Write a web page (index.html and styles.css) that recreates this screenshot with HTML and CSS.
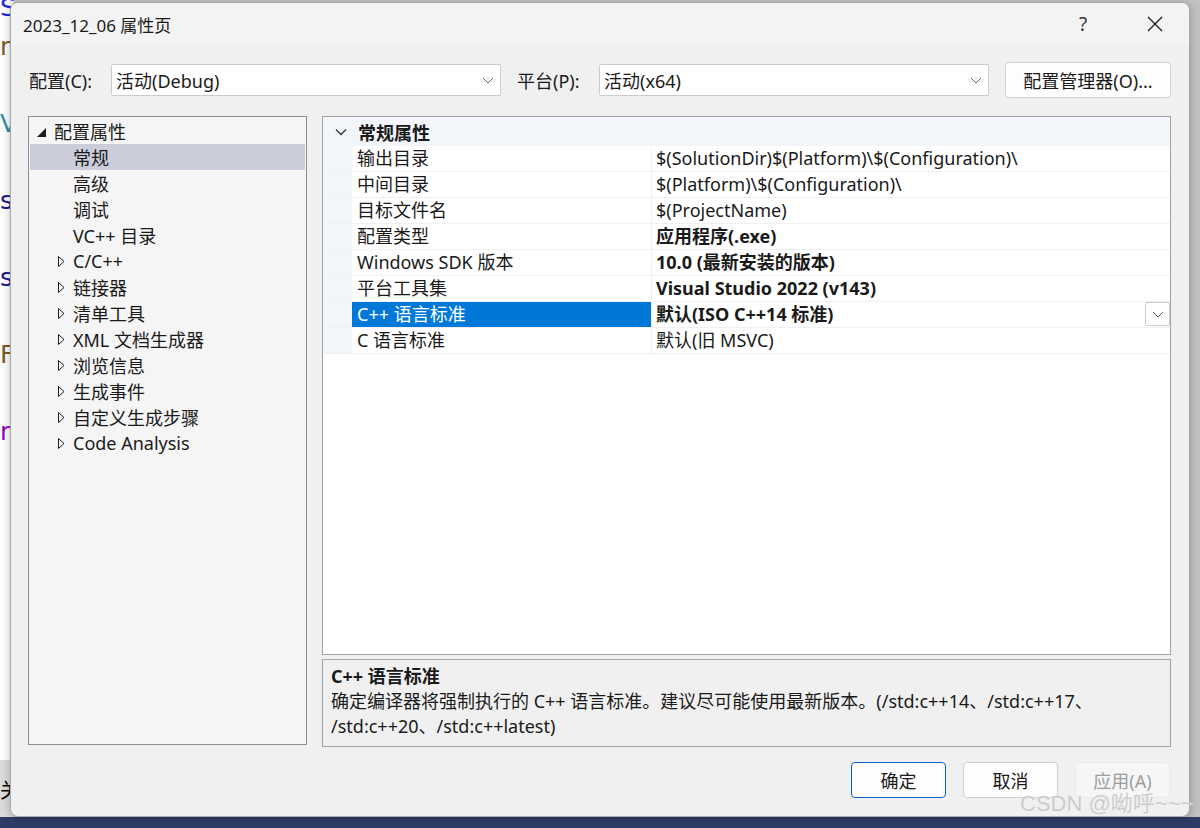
FILE: index.html
```html
<!DOCTYPE html>
<html lang="zh-CN">
<head>
  <meta charset="UTF-8">
  <title>2023_12_06 属性页</title>
  <link rel="stylesheet" href="styles.css">
</head>
<body>
  <!-- editor window behind the dialog, only its left edge shows -->
  <div class="editor">
    <div class="code kw">S</div>
    <div class="code ty">n</div>
    <div class="code"></div>
    <div class="code cl">V</div>
    <div class="code"></div>
    <div class="code">s</div>
    <div class="code"></div>
    <div class="code">s</div>
    <div class="code"></div>
    <div class="code ty">F</div>
    <div class="code"></div>
    <div class="code pu">r</div>
    <div class="status">关</div>
  </div>
  <div class="taskbar"></div>

  <div class="dialog">
    <div class="titlebar">
      <span class="title">2023_12_06 属性页</span>
      <span class="tb-btn help">?</span>
      <span class="tb-btn close">
        <svg width="16" height="16" viewBox="0 0 16 16"><path d="M1 1L15 15M15 1L1 15" stroke="#1a1a1a" stroke-width="1.3" fill="none"/></svg>
      </span>
    </div>

    <div class="config-row">
      <span class="lbl">配置(C):</span>
      <div class="combo">
        <span>活动(Debug)</span>
        <svg width="12" height="7" viewBox="0 0 12 7"><polyline points="1,1 6,6 11,1" stroke="#606060" stroke-width="1" fill="none"/></svg>
      </div>
      <span class="lbl lbl2">平台(P):</span>
      <div class="combo">
        <span>活动(x64)</span>
        <svg width="12" height="7" viewBox="0 0 12 7"><polyline points="1,1 6,6 11,1" stroke="#606060" stroke-width="1" fill="none"/></svg>
      </div>
      <button class="btn mgr">配置管理器(O)...</button>
    </div>

    <div class="main">
      <div class="tree">
        <div class="node root">
          <span class="tw"><svg width="9" height="9" viewBox="0 0 9 9"><polygon points="9,0 9,9 0,9" fill="#1e1e1e"/></svg></span>
          配置属性
        </div>
        <div class="node leaf selected"><span class="tw"></span>常规</div>
        <div class="node leaf"><span class="tw"></span>高级</div>
        <div class="node leaf"><span class="tw"></span>调试</div>
        <div class="node leaf"><span class="tw"></span>VC++ 目录</div>
        <div class="node leaf"><span class="tw"><svg class="col" width="7" height="11" viewBox="0 0 7 11"><polygon points="0.5,0.5 6,5.5 0.5,10.5" fill="none" stroke="#1e1e1e"/></svg></span>C/C++</div>
        <div class="node leaf"><span class="tw"><svg class="col" width="7" height="11" viewBox="0 0 7 11"><polygon points="0.5,0.5 6,5.5 0.5,10.5" fill="none" stroke="#1e1e1e"/></svg></span>链接器</div>
        <div class="node leaf"><span class="tw"><svg class="col" width="7" height="11" viewBox="0 0 7 11"><polygon points="0.5,0.5 6,5.5 0.5,10.5" fill="none" stroke="#1e1e1e"/></svg></span>清单工具</div>
        <div class="node leaf"><span class="tw"><svg class="col" width="7" height="11" viewBox="0 0 7 11"><polygon points="0.5,0.5 6,5.5 0.5,10.5" fill="none" stroke="#1e1e1e"/></svg></span>XML 文档生成器</div>
        <div class="node leaf"><span class="tw"><svg class="col" width="7" height="11" viewBox="0 0 7 11"><polygon points="0.5,0.5 6,5.5 0.5,10.5" fill="none" stroke="#1e1e1e"/></svg></span>浏览信息</div>
        <div class="node leaf"><span class="tw"><svg class="col" width="7" height="11" viewBox="0 0 7 11"><polygon points="0.5,0.5 6,5.5 0.5,10.5" fill="none" stroke="#1e1e1e"/></svg></span>生成事件</div>
        <div class="node leaf"><span class="tw"><svg class="col" width="7" height="11" viewBox="0 0 7 11"><polygon points="0.5,0.5 6,5.5 0.5,10.5" fill="none" stroke="#1e1e1e"/></svg></span>自定义生成步骤</div>
        <div class="node leaf"><span class="tw"><svg class="col" width="7" height="11" viewBox="0 0 7 11"><polygon points="0.5,0.5 6,5.5 0.5,10.5" fill="none" stroke="#1e1e1e"/></svg></span>Code Analysis</div>
      </div>

      <div class="right">
        <div class="grid">
          <div class="category">
            <svg width="12" height="8" viewBox="0 0 12 8"><polyline points="1,1.5 6,6.5 11,1.5" stroke="#333" stroke-width="1.3" fill="none"/></svg>
            <span>常规属性</span>
          </div>
          <div class="prop"><span class="gut"></span><span class="name">输出目录</span><span class="val">$(SolutionDir)$(Platform)\$(Configuration)\</span></div>
          <div class="prop"><span class="gut"></span><span class="name">中间目录</span><span class="val">$(Platform)\$(Configuration)\</span></div>
          <div class="prop"><span class="gut"></span><span class="name">目标文件名</span><span class="val">$(ProjectName)</span></div>
          <div class="prop"><span class="gut"></span><span class="name">配置类型</span><span class="val bold">应用程序(.exe)</span></div>
          <div class="prop"><span class="gut"></span><span class="name">Windows SDK 版本</span><span class="val bold">10.0 (最新安装的版本)</span></div>
          <div class="prop"><span class="gut"></span><span class="name">平台工具集</span><span class="val bold">Visual Studio 2022 (v143)</span></div>
          <div class="prop active">
            <span class="gut"></span><span class="name">C++ 语言标准</span>
            <span class="val bold">默认(ISO C++14 标准)
              <span class="drop"><svg width="12" height="7" viewBox="0 0 12 7"><polyline points="1,1 6,6 11,1" stroke="#555" stroke-width="1" fill="none"/></svg></span>
            </span>
          </div>
          <div class="prop"><span class="gut"></span><span class="name">C 语言标准</span><span class="val">默认(旧 MSVC)</span></div>
        </div>
        <div class="desc">
          <div class="desc-title">C++ 语言标准</div>
          <div>确定编译器将强制执行的 C++ 语言标准。建议尽可能使用最新版本。(/std:c++14、/std:c++17、<br>/std:c++20、/std:c++latest)</div>
        </div>
      </div>
    </div>

    <div class="buttons">
      <button class="btn primary">确定</button>
      <button class="btn">取消</button>
      <button class="btn disabled">应用(A)</button>
    </div>
  </div>

  <div class="watermark">CSDN @呦呼~~~</div>
</body>
</html>
```

FILE: styles.css
```css
* {
  box-sizing: border-box;
}

html, body {
  margin: 0;
}

body {
  width: 1200px;
  height: 828px;
  overflow: hidden;
  position: relative;
  background: #c2c2c2;
  font-family: "Noto Sans", "Noto Sans CJK SC", sans-serif;
  font-size: 18px;
  color: #1a1a1a;
}

/* desktop pieces */
.editor {
  position: absolute;
  left: 0;
  top: 0;
  width: 14px;
  height: 817px;
  overflow: hidden;
  background: linear-gradient(to right, #ffffff 60%, #e6e6e6);
  font-family: "DejaVu Sans", sans-serif;
  font-size: 25px;
  line-height: 38.5px;
  white-space: nowrap;
  color: #1a1a8c;
}

.code:first-child {
  margin-top: -11px;
}

.code {
  height: 38.5px;
}

.kw { color: #1f2be0; }
.ty { color: #7a5a2a; }
.cl { color: #2b91af; }
.pu { color: #8f08c4; }

.status {
  position: absolute;
  left: 0;
  top: 760px;
  width: 100%;
  height: 57px;
  background: #dcdcdc;
  color: #000;
  font-family: "Noto Sans CJK SC", sans-serif;
  font-size: 20px;
  line-height: 60px;
}

.taskbar {
  position: absolute;
  left: 0;
  bottom: 0;
  width: 100%;
  height: 11px;
  background: #2f3d66;
}

.watermark {
  position: absolute;
  left: 1020px;
  top: 790px;
  font-family: "Liberation Sans", "Noto Sans CJK SC", sans-serif;
  font-size: 22px;
  line-height: 28px;
  color: #cbcbcb;
  text-shadow: 0 0 1px #ffffff;
  white-space: nowrap;
}

/* dialog window */
.dialog {
  position: absolute;
  left: 10px;
  top: 2px;
  width: 1180px;
  height: 815px;
  display: flex;
  flex-direction: column;
  background: #f0f0f0;
  border: 1px solid #a9a9a9;
  border-radius: 8px;
  box-shadow: 0 2px 10px rgba(0, 0, 0, 0.25);
  overflow: hidden;
}

.titlebar {
  height: 42px;
  flex: none;
  display: flex;
  align-items: center;
  padding-left: 12px;
  padding-right: 11px;
  background: #f3f3f3;
}

.title {
  font-size: 17px;
}

.tb-btn {
  width: 46px;
  height: 42px;
  display: flex;
  align-items: center;
  justify-content: center;
}

.help {
  margin-left: auto;
  margin-right: 26px;
  font-size: 19px;
  color: #333;
}

.config-row {
  display: flex;
  align-items: center;
  height: 36px;
  margin-top: 17px;
  padding-left: 18px;
}

.lbl {
  width: 82px;
}

.lbl2 {
  margin-left: 16px;
}

.combo {
  width: 390px;
  height: 32px;
  display: flex;
  align-items: center;
  justify-content: space-between;
  padding: 0 6px 0 4px;
  background: #fff;
  border: 1px solid #cccccc;
  border-radius: 2px;
}

.btn {
  height: 36px;
  width: 95px;
  font-family: inherit;
  font-size: 18px;
  color: #1a1a1a;
  background: #fdfdfd;
  border: 1px solid #d0d0d0;
  border-radius: 4px;
  padding: 0;
}

.mgr {
  width: 166px;
  margin-left: 16px;
}

/* tree + property pages */
.main {
  display: flex;
  gap: 15px;
  height: 631px;
  margin-top: 18px;
  padding-left: 17px;
  padding-right: 18px;
}

.tree {
  width: 279px;
  height: 629px;
  padding: 1px;
  background: #f5f5f5;
  border: 1px solid #8a8f99;
}

.node {
  height: 26px;
  display: flex;
  align-items: center;
  white-space: nowrap;
}

.node .tw {
  width: 17px;
  flex: none;
  display: flex;
  align-items: center;
}

.root {
  padding-left: 7px;
}

.root .tw svg {
  margin-top: 2px;
}

.leaf {
  padding-left: 26px;
}

.leaf .col {
  margin-left: 2px;
}

.selected {
  background: #cbcdda;
}

.right {
  flex: 1;
  display: flex;
  flex-direction: column;
  gap: 4px;
}

.grid {
  flex: 1;
  background: #fff;
  border: 1px solid #a3a3a3;
}

.category {
  height: 29px;
  display: flex;
  align-items: center;
  padding-left: 12px;
  gap: 11px;
  background: #f2f5fa;
  font-weight: bold;
}

.prop {
  height: 26px;
  display: flex;
  border-bottom: 1px solid #f0f0f0;
  line-height: 25px;
  white-space: nowrap;
}

.gut {
  width: 29px;
  flex: none;
  background: #f2f5fa;
}

.name {
  width: 300px;
  flex: none;
  padding-left: 5px;
  border-right: 1px solid #f0f0f0;
}

.val {
  flex: 1;
  padding-left: 4px;
  display: flex;
}

.bold {
  font-weight: bold;
}

.active .name {
  background: #0078d7;
  color: #fff;
}

.drop {
  margin-left: auto;
  width: 25px;
  height: 24px;
  display: flex;
  align-items: center;
  justify-content: center;
  background: #fff;
  border: 1px solid #cccccc;
  border-radius: 2px;
}

.desc {
  height: 88px;
  flex: none;
  padding: 4px 8px;
  line-height: 25px;
  background: #f0f0f0;
  border: 1px solid #a3a3a3;
  white-space: nowrap;
}

.desc-title {
  font-weight: bold;
}

.buttons {
  display: flex;
  justify-content: flex-end;
  gap: 17px;
  margin-top: 15px;
  padding-right: 19px;
}

.primary {
  border-color: #0067c0;
}

.disabled {
  background: #f6f6f6;
  border-color: #ececec;
  color: #9d9d9d;
}
```
